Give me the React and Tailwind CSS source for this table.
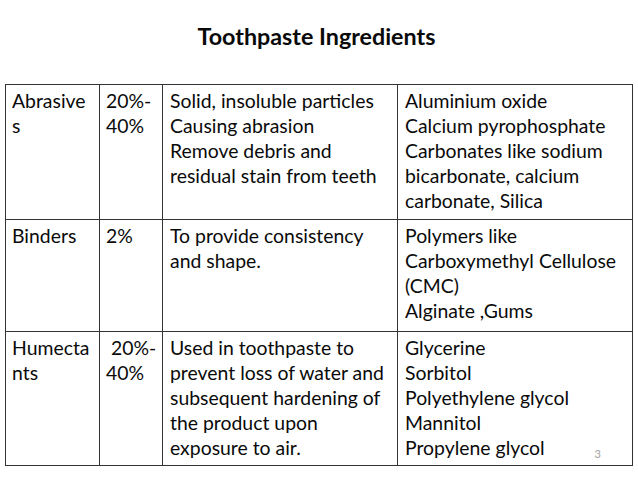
import React from "react";

const rows = [
  {
    h: "h-[134px]",
    a: ["Abrasive", "s"],
    b: ["20%-", "40%"],
    c: ["Solid, insoluble particles", "Causing abrasion", "Remove debris and", "residual stain from teeth"],
    d: ["Aluminium oxide", "Calcium pyrophosphate", "Carbonates like sodium", "bicarbonate, calcium", "carbonate, Silica"],
  },
  {
    h: "h-[112px]",
    a: ["Binders"],
    b: ["2%"],
    c: ["To provide consistency", "and shape."],
    d: ["Polymers like", "Carboxymethyl Cellulose", "(CMC)", "Alginate ,Gums"],
  },
  {
    h: "h-[134px]",
    a: ["Humecta", "nts"],
    b: ["\u00a020%-", "40%"],
    c: ["Used in toothpaste to", "prevent loss of water and", "subsequent hardening of", "the product upon", "exposure to air."],
    d: ["Glycerine", "Sorbitol", "Polyethylene glycol", "Mannitol", "Propylene glycol"],
  },
];

function Lines({ items }) {
  return (
    <div className="flex flex-col">
      {items.map((t, i) => (
        <div key={i} className="whitespace-pre leading-[25px]">{t}</div>
      ))}
    </div>
  );
}

export default function App() {
  return (
    <div className="w-[638px] h-[478px] bg-white text-[#0a0a0a] relative" style={{ fontFamily: "Lato, 'Open Sans', sans-serif" }}>
      <div className="h-[84px] flex justify-center">
        <div className="mt-[20px] ml-[-5px] text-[23.3px] font-bold leading-[32px]">Toothpaste Ingredients</div>
      </div>
      <div className="ml-[5px] w-[628px] border border-[#333] text-[19.4px]">
        {rows.map((r, i) => (
          <div key={i} className={`flex ${r.h} ${i > 0 ? "border-t border-[#333]" : ""}`}>
            <div className="w-[93px] pl-[6px] pt-[3px]"><Lines items={r.a} /></div>
            <div className="w-[63px] border-l border-[#333] pl-[6px] pt-[3px]"><Lines items={r.b} /></div>
            <div className="w-[235px] border-l border-[#333] pl-[7px] pt-[3px]"><Lines items={r.c} /></div>
            <div className="flex-1 border-l border-[#333] pl-[7px] pt-[3px] relative">
              <Lines items={r.d} />
              {i === 2 && (
                <div className="absolute right-[31px] bottom-[3px] text-[11px] text-[#a0a0a0]">3</div>
              )}
            </div>
          </div>
        ))}
      </div>
    </div>
  );
}
